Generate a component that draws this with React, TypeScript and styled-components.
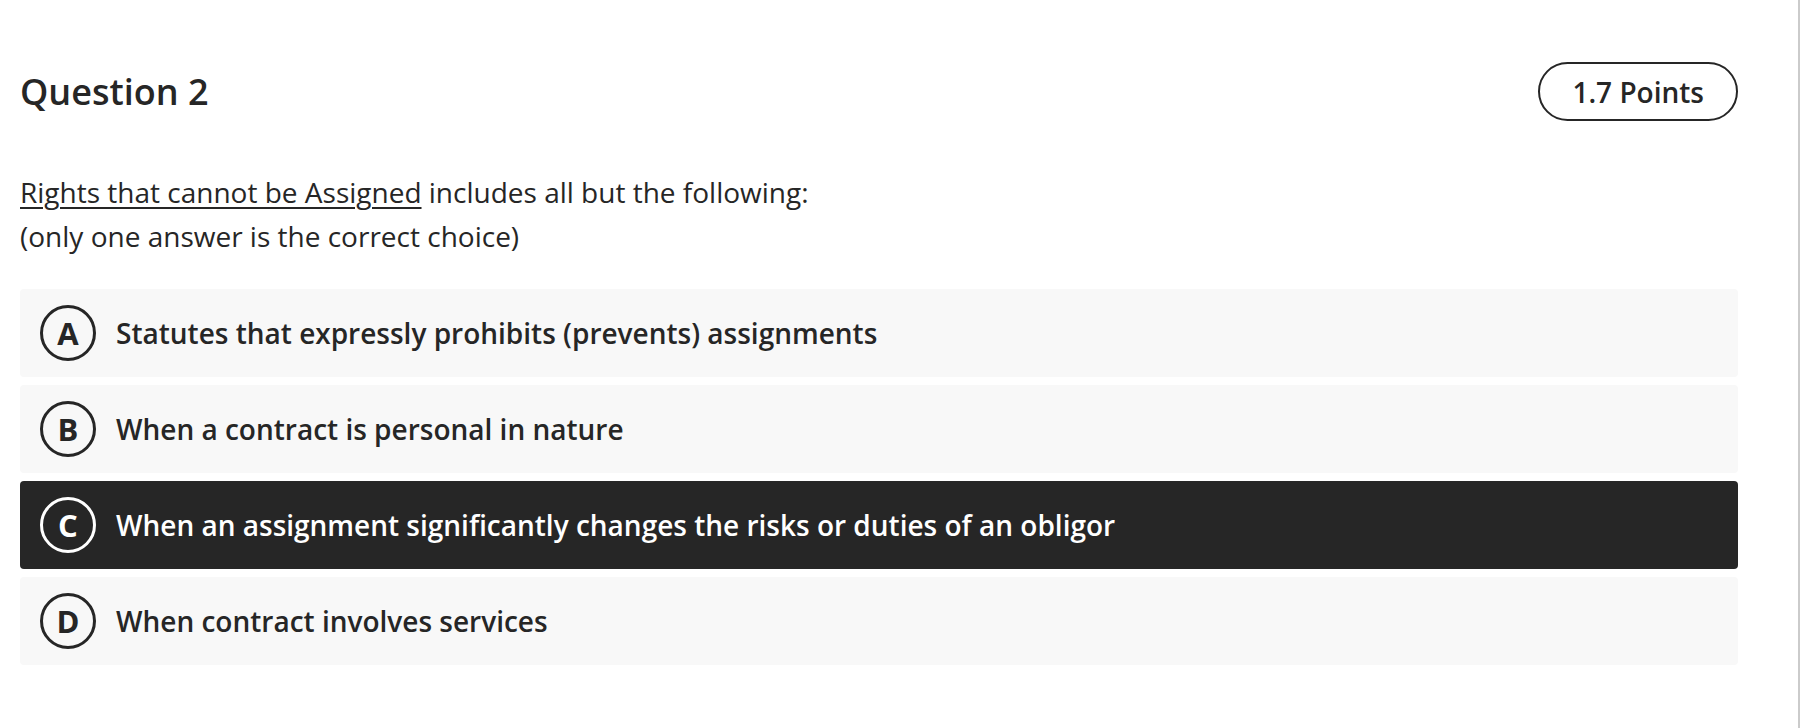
import React from "react";
import styled, { createGlobalStyle } from "styled-components";

const GlobalStyle = createGlobalStyle`
  html, body {
    margin: 0;
    padding: 0;
    background: #ffffff;
  }
  body {
    font-family: "Open Sans", "Noto Sans", "Liberation Sans", sans-serif;
    color: #262626;
  }
`;

const Page = styled.div`
  box-sizing: border-box;
  width: 1800px;
  min-height: 728px;
  padding: 62px 60px 0 20px;
  border-right: 2px solid #cbcbcb;
`;

const Header = styled.header`
  display: flex;
  align-items: center;
  justify-content: space-between;
`;

const Title = styled.h2`
  margin: 0;
  font-size: 36px;
  line-height: 46px;
  font-weight: 600;
  color: #262626;
`;

const PointsPill = styled.span`
  box-sizing: border-box;
  height: 59px;
  padding: 0 32px;
  display: inline-flex;
  align-items: center;
  border: 2px solid #262626;
  border-radius: 30px;
  font-size: 28px;
  font-weight: 600;
  color: #262626;
`;

const Prompt = styled.div`
  margin-top: 50px;
  font-size: 28px;
  line-height: 43.5px;
  font-weight: 400;
  color: #262626;
`;

const Underlined = styled.span`
  text-decoration: underline;
  text-underline-offset: 4px;
  text-decoration-thickness: 2px;
`;

const Options = styled.ul`
  list-style: none;
  margin: 31px 0 0 0;
  padding: 0;
  display: flex;
  flex-direction: column;
  gap: 8px;
`;

const Option = styled.li<{ $selected?: boolean }>`
  box-sizing: border-box;
  height: 88px;
  padding: 0 20px;
  display: flex;
  align-items: center;
  gap: 20px;
  border-radius: 4px;
  background: ${(p) => (p.$selected ? "#262626" : "#f8f8f8")};
  color: ${(p) => (p.$selected ? "#ffffff" : "#262626")};
`;

const Letter = styled.span<{ $selected?: boolean }>`
  box-sizing: border-box;
  flex: none;
  width: 56px;
  height: 56px;
  border-radius: 50%;
  border: 3.5px solid ${(p) => (p.$selected ? "#ffffff" : "#262626")};
  display: flex;
  align-items: center;
  justify-content: center;
  font-size: 31px;
  font-weight: 700;
  line-height: 1;
`;

const OptionText = styled.span`
  font-size: 28px;
  font-weight: 600;
  line-height: 40px;
`;

const options = [
  { key: "A", text: "Statutes that expressly prohibits (prevents) assignments" },
  { key: "B", text: "When a contract is personal in nature" },
  { key: "C", text: "When an assignment significantly changes the risks or duties of an obligor", selected: true },
  { key: "D", text: "When contract involves services" },
];

export default function App() {
  return (
    <>
      <GlobalStyle />
      <Page>
        <Header>
          <Title>Question 2</Title>
          <PointsPill>1.7 Points</PointsPill>
        </Header>
        <Prompt>
          <Underlined>Rights that cannot be Assigned</Underlined> includes all but the following:
          <br />
          (only one answer is the correct choice)
        </Prompt>
        <Options>
          {options.map((o) => (
            <Option key={o.key} $selected={o.selected}>
              <Letter $selected={o.selected}>{o.key}</Letter>
              <OptionText>{o.text}</OptionText>
            </Option>
          ))}
        </Options>
      </Page>
    </>
  );
}
